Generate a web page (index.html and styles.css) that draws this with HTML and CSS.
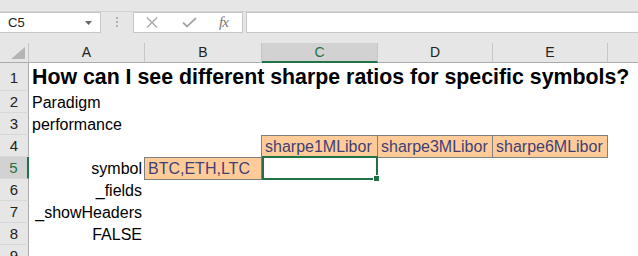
FILE: index.html
```html
<!DOCTYPE html>
<html lang="en">
<head>
    <meta charset="UTF-8">
    <title>Sharpe ratios</title>
    <link rel="stylesheet" href="styles.css">
</head>
<body>
    <!-- Formula bar -->
    <div class="formula-bar">
        <div class="name-box">
            <span>C5</span>
            <svg class="arrow" width="8" height="4" viewBox="0 0 8 4"><path d="M0 0H7L3.5 4Z" fill="#666"/></svg>
        </div>
        <svg class="grip" width="3" height="11" viewBox="0 0 3 11">
            <rect x="0" y="0" width="2" height="2" fill="#b0b0b0"/>
            <rect x="0" y="4" width="2" height="2" fill="#b0b0b0"/>
            <rect x="0" y="8" width="2" height="2" fill="#b0b0b0"/>
        </svg>
        <div class="fx-buttons">
            <svg width="12" height="11" viewBox="0 0 12 11"><path d="M1 0.5L11 10.5M11 0.5L1 10.5" stroke="#a8a8a8" stroke-width="1.3" fill="none"/></svg>
            <svg width="15" height="11" viewBox="0 0 15 11"><path d="M1 5.5L5 9.5L14 1" stroke="#a8a8a8" stroke-width="1.8" fill="none"/></svg>
            <span class="fx">fx</span>
        </div>
        <div class="formula-input"></div>
    </div>

    <!-- Sheet -->
    <div class="sheet">
        <div class="corner">
            <svg width="14" height="12" viewBox="0 0 14 12"><path d="M14 0V12H0Z" fill="#b4b4b4"/></svg>
        </div>
        <div class="col-head">A</div>
        <div class="col-head">B</div>
        <div class="col-head active">C</div>
        <div class="col-head">D</div>
        <div class="col-head">E</div>
        <div class="col-head last"></div>

        <div class="row-head tall">1</div>
        <div class="cell title">How can I see different sharpe ratios for specific symbols?</div>

        <div class="row-head">2</div>
        <div class="cell">Paradigm</div>
        <div class="cell span-rest"></div>

        <div class="row-head">3</div>
        <div class="cell">performance</div>
        <div class="cell span-rest"></div>

        <div class="row-head">4</div>
        <div class="cell"></div>
        <div class="cell"></div>
        <div class="cell input">sharpe1MLibor</div>
        <div class="cell input">sharpe3MLibor</div>
        <div class="cell input">sharpe6MLibor</div>
        <div class="cell"></div>

        <div class="row-head active">5</div>
        <div class="cell right">symbol</div>
        <div class="cell input">BTC,ETH,LTC</div>
        <div class="cell selected">
            <div class="selection"></div>
        </div>
        <div class="cell span-3"></div>

        <div class="row-head">6</div>
        <div class="cell right">_fields</div>
        <div class="cell span-rest"></div>

        <div class="row-head">7</div>
        <div class="cell right">_showHeaders</div>
        <div class="cell span-rest"></div>

        <div class="row-head">8</div>
        <div class="cell right">FALSE</div>
        <div class="cell span-rest"></div>

        <div class="row-head">9</div>
        <div class="cell span-all"></div>
    </div>
</body>
</html>
```

FILE: styles.css
```css
body {
    margin: 0;
    width: 638px;
    height: 256px;
    overflow: hidden;
    background: #ffffff;
    font-family: "Liberation Sans", Arial, sans-serif;
}

/* Formula bar */
.formula-bar {
    height: 43px;
    box-sizing: border-box;
    background: #e6e6e6;
    border-top: 11px solid #e6e6e6;
    display: flex;
    align-items: flex-start;
    position: relative;
}
.formula-bar::before {
    content: "";
    position: absolute;
    left: 0;
    right: 0;
    top: 0;
    height: 1px;
    background: #d2d2d2;
}
.name-box {
    margin-top: 1px;
    margin-left: -1px;
    width: 102px;
    height: 21px;
    box-sizing: border-box;
    background: #ffffff;
    border: 1px solid #c6c6c6;
    display: flex;
    align-items: center;
    justify-content: space-between;
    padding: 0 7px 0 8px;
    font-size: 13px;
    color: #222;
}
.name-box .arrow {
    margin-top: 1px;
}
.grip {
    margin: 6px 0 0 15px;
}
.fx-buttons {
    margin: 1px 0 0 14px;
    width: 110px;
    height: 21px;
    box-sizing: border-box;
    background: #ffffff;
    border: 1px solid #c6c6c6;
    display: flex;
    align-items: center;
    padding-left: 12px;
    gap: 24px;
}
.fx-buttons .fx {
    margin-left: -2px;
    font-family: "Liberation Serif", serif;
    font-style: italic;
    font-size: 15px;
    color: #777;
    letter-spacing: -1px;
}
.formula-input {
    margin: 1px 0 0 3px;
    flex: 1;
    height: 21px;
    box-sizing: border-box;
    background: #ffffff;
    border: 1px solid #c6c6c6;
    border-right: none;
}

/* Sheet grid */
.sheet {
    position: relative;
    display: grid;
    grid-template-columns: 29px 116px 117px 116px 115px 115px 1fr;
    grid-template-rows: 20px 28px repeat(8, 22px);
}
.corner {
    background: #e6e6e6;
    border-right: 1px solid #c6c6c6;
    border-bottom: 1px solid #ababab;
    display: flex;
    align-items: flex-end;
    justify-content: flex-end;
    padding: 0 3px 3px 0;
}
.col-head {
    background: #e6e6e6;
    border-right: 1px solid #c6c6c6;
    border-bottom: 1px solid #ababab;
    font-size: 14px;
    line-height: 19px;
    text-align: center;
    color: #222;
}
.col-head.active {
    background: #d2d2d2;
    color: #217346;
    border-bottom: 2px solid #217346;
    line-height: 18px;
}
.col-head.last {
    border-right: none;
}
.row-head {
    grid-column: 1;
    background: #e6e6e6;
    border-right: 1px solid #ababab;
    border-bottom: 1px solid #d8d8d8;
    font-size: 15px;
    line-height: 21px;
    text-align: center;
    color: #222;
}
.row-head.tall {
    line-height: 30px;
}
.row-head.active {
    background: #d2d2d2;
    color: #217346;
    border-right: 2px solid #217346;
}

.cell {
    display: flex;
    align-items: flex-end;
    padding: 0 3px 1px 3px;
    font-size: 16px;
    line-height: 19px;
    white-space: nowrap;
    color: #000;
    min-width: 0;
}
.cell.right {
    justify-content: flex-end;
}
.cell.title {
    grid-column: 2 / -1;
    font-size: 21.33px;
    font-weight: bold;
    line-height: 25px;
    padding-bottom: 1px;
}
.span-rest {
    grid-column: span 5;
}
.span-3 {
    grid-column: span 3;
}
.span-all {
    grid-column: 2 / -1;
}
.input {
    background: #ffcc99;
    color: #3f3f76;
    border: 1px solid #7f7f7f;
    margin-left: -1px;
    margin-bottom: -1px;
    padding: 0 3px 1px 3px;
}
.selected {
    position: relative;
    padding: 0;
}
.selection {
    position: absolute;
    left: 0;
    top: -1px;
    width: 116px;
    height: 24px;
    box-sizing: border-box;
    border: 2px solid #217346;
}
.selection::after {
    content: "";
    position: absolute;
    right: -4px;
    bottom: -4px;
    width: 5px;
    height: 5px;
    background: #217346;
    border: 1px solid #ffffff;
}
```
